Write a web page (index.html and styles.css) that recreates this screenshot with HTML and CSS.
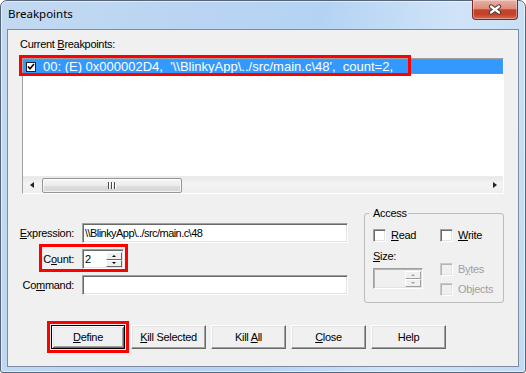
FILE: index.html
```html
<!DOCTYPE html>
<html>
<head>
<meta charset="utf-8">
<title>Breakpoints</title>
<link rel="stylesheet" href="styles.css">
</head>
<body>
<div class="window">
  <div class="titlebar">
    <span class="title">Breakpoints</span>
    <div class="close">
      <svg width="14" height="11" viewBox="0 0 14 11">
        <path d="M3 2.5 L11 8.5 M11 2.5 L3 8.5" stroke="#4a3a38" stroke-width="4.2" stroke-linecap="round" fill="none"/>
        <path d="M3 2.5 L11 8.5 M11 2.5 L3 8.5" stroke="#ffffff" stroke-width="2.2" stroke-linecap="round" fill="none"/>
      </svg>
    </div>
  </div>
  <div class="client">
    <div class="cur-label">Current <u>B</u>reakpoints:</div>
    <div class="listbox">
      <div class="rows">
        <div class="row">
          <span class="lcb">
            <svg width="8" height="8" viewBox="0 0 8 8"><path d="M1 3.5 L3 5.8 L7 1" stroke="#000" stroke-width="1.6" fill="none"/></svg>
          </span>
          <span class="row-text">00: (E) 0x000002D4,  '\\BlinkyApp\../src/main.c\48',  count=2,</span>
        </div>
      </div>
      <div class="hscroll">
        <div class="sb-btn"><span class="arr-left"></span></div>
        <div class="sb-track">
          <div class="thumb"><span class="grip"></span><span class="grip"></span><span class="grip"></span></div>
        </div>
        <div class="sb-btn"><span class="arr-right"></span></div>
      </div>
      <div class="mark mark-row"></div>
    </div>
    <div class="lower">
      <div class="form">
        <label class="flabel"><u>E</u>xpression:</label>
        <div class="edit"><span class="edit-text path">\\BlinkyApp\../src/main.c\48</span></div>
        <label class="flabel">C<u>o</u>unt:</label>
        <div class="spinedit count">
          <span class="edit-text">2</span>
          <div class="spin"><span class="sp"><i class="tri-up"></i></span><span class="sp"><i class="tri-down"></i></span></div>
        </div>
        <label class="flabel">Co<u>m</u>mand:</label>
        <div class="edit"></div>
        <div class="mark mark-count"></div>
      </div>
      <fieldset class="access">
        <legend>Access</legend>
        <div class="col col1">
          <div class="check read"><span class="cb"></span><span><u>R</u>ead</span></div>
          <div class="size-label"><u>S</u>ize:</div>
          <div class="spinedit size disabled">
            <span class="edit-text"></span>
            <div class="spin"><span class="sp"><i class="tri-up"></i></span><span class="sp"><i class="tri-down"></i></span></div>
          </div>
        </div>
        <div class="col col2">
          <div class="check write"><span class="cb"></span><span><u>W</u>rite</span></div>
          <div class="check disabled bytes"><span class="cb"></span><span>B<u>y</u>tes</span></div>
          <div class="check disabled objects"><span class="cb"></span><span>Objects</span></div>
        </div>
      </fieldset>
    </div>
    <div class="buttons">
      <button class="btn default"><u>D</u>efine</button>
      <button class="btn"><u>K</u>ill Selected</button>
      <button class="btn">Kill <u>A</u>ll</button>
      <button class="btn close-btn"><u>C</u>lose</button>
      <button class="btn help-btn">Help</button>
    </div>
  </div>
</div>
</body>
</html>
```
FILE: styles.css
```css
html, body {
  margin: 0;
  padding: 0;
}
body {
  width: 526px;
  height: 373px;
  overflow: hidden;
  background: #ffffff;
  font-family: "Liberation Sans", Arial, sans-serif;
  font-size: 11px;
  letter-spacing: -0.3px;
  color: #000;
}
u { text-decoration: underline; text-underline-offset: 1px; }

.window {
  box-sizing: border-box;
  width: 526px;
  height: 373px;
  border: 1px solid #56657a;
  border-radius: 7px 7px 3px 3px;
  padding: 0 6px 5px 6px;
  background: linear-gradient(100deg, #c3d9f1 0%, #bad5f2 30%, #b4d3f3 55%, #d0e4f8 78%, #c2daf3 100%);
  box-shadow: inset 0 0 0 1px rgba(255,255,255,0.55);
  display: flex;
  flex-direction: column;
}

.titlebar {
  height: 28px;
  display: flex;
  align-items: flex-start;
  justify-content: space-between;
}
.title {
  margin: 5px 0 0 1px;
  font-family: "Noto Sans", "Liberation Sans", sans-serif;
  font-size: 11.5px;
  line-height: 16px;
  letter-spacing: 0;
  color: #000;
}
.close {
  box-sizing: border-box;
  width: 46px;
  height: 20px;
  margin: -1px 1px 0 0;
  border: 1px solid #7a2c22;
  border-top: none;
  border-radius: 0 0 4px 4px;
  background: linear-gradient(#e9b0a4 0%, #dd8d7d 45%, #c6432c 52%, #c44028 75%, #d76a52 100%);
  box-shadow: inset 0 0 0 1px rgba(255,255,255,0.35);
  display: flex;
  align-items: center;
  justify-content: center;
}

.client {
  flex: 1;
  border: 1px solid #7d8ca0;
  background: #f0f0f0;
  display: flex;
  flex-direction: column;
  min-height: 0;
}

.cur-label {
  margin: 8px 0 0 12px;
  line-height: 13px;
}

.listbox {
  position: relative;
  box-sizing: border-box;
  margin: 7px 0 0 14px;
  width: 482px;
  height: 136px;
  border: 1px solid;
  border-color: #a0a0a0 #ffffff #ffffff #a0a0a0;
  background: #fff;
  display: flex;
  flex-direction: column;
}
.rows { flex: 1; }
.row {
  height: 15px;
  background: #3399ff;
  color: #fff;
  display: flex;
  align-items: center;
  outline: 1px dotted #b58a55;
  outline-offset: -1px;
}
.lcb {
  box-sizing: border-box;
  width: 10px;
  height: 10px;
  margin-left: 3px;
  border: 1px solid #222;
  background: #fff;
  display: flex;
  align-items: center;
  justify-content: center;
}
.row-text {
  margin-left: 7px;
  white-space: pre;
  font-size: 13px;
  letter-spacing: 0;
  line-height: 15px;
}

.hscroll {
  height: 17px;
  display: flex;
  background: linear-gradient(#e8e8e8, #f3f3f3 40%, #eeeeee);
  border-top: 1px solid #ececec;
  box-sizing: border-box;
}
.sb-btn {
  width: 17px;
  display: flex;
  align-items: center;
  justify-content: center;
}
.arr-left {
  width: 0; height: 0;
  border-top: 3.5px solid transparent;
  border-bottom: 3.5px solid transparent;
  border-right: 4px solid #222;
}
.arr-right {
  width: 0; height: 0;
  border-top: 3.5px solid transparent;
  border-bottom: 3.5px solid transparent;
  border-left: 4px solid #222;
}
.sb-track {
  flex: 1;
  display: flex;
  align-items: center;
}
.thumb {
  box-sizing: border-box;
  margin-left: 2px;
  width: 140px;
  height: 15px;
  border: 1px solid #979797;
  border-radius: 2px;
  background: linear-gradient(#f6f6f6 0%, #ececec 50%, #dedede 51%, #d6d6d6 100%);
  box-shadow: inset 0 0 0 1px rgba(255,255,255,0.7);
  display: flex;
  align-items: center;
  justify-content: center;
  gap: 1px;
}
.grip {
  width: 1px;
  height: 7px;
  background: #4a4a4a;
  border-right: 1px solid #ffffff;
}

.mark {
  position: absolute;
  box-sizing: border-box;
  border: 3px solid #ff0000;
  pointer-events: none;
}
.mark-row {
  left: -4px;
  top: -4px;
  width: 392px;
  height: 21px;
}

.lower {
  margin-top: 13px;
  display: flex;
  align-items: flex-start;
}
.form {
  position: relative;
  margin-top: 16px;
  display: grid;
  grid-template-columns: 66px 266px;
  grid-auto-rows: 20px;
  column-gap: 8px;
  row-gap: 6px;
}
.flabel {
  align-self: center;
  text-align: right;
  line-height: 13px;
}
.edit, .spinedit {
  box-sizing: border-box;
  height: 20px;
  border: 1px solid;
  border-color: #a0a0a0 #ffffff #ffffff #a0a0a0;
  box-shadow: inset 1px 1px 0 #696969, inset -1px -1px 0 #e3e3e3;
  background: #fff;
  display: flex;
  align-items: center;
}
.edit-text {
  padding-left: 2px;
  line-height: 13px;
  white-space: pre;
}
.edit-text.path { letter-spacing: -0.55px; }
.spinedit.count {
  width: 42px;
}
.spinedit .edit-text { flex: 1; }
.spin {
  width: 16px;
  align-self: stretch;
  display: flex;
  flex-direction: column;
  padding: 2px 1px 1px 0;
  gap: 0;
}
.sp {
  flex: 1;
  box-sizing: border-box;
  background: #f0f0f0;
  border: 1px solid;
  border-color: #ffffff #696969 #696969 #ffffff;
  display: flex;
  align-items: center;
  justify-content: center;
}
.tri-up {
  width: 0; height: 0;
  border-left: 2px solid transparent;
  border-right: 2px solid transparent;
  border-bottom: 2px solid #000;
}
.tri-down {
  width: 0; height: 0;
  border-left: 2px solid transparent;
  border-right: 2px solid transparent;
  border-top: 2px solid #000;
}
.mark-count {
  left: 31px;
  top: 21px;
  width: 89px;
  height: 28px;
}

.access {
  box-sizing: border-box;
  margin: 0 0 0 16px;
  padding: 0 8px;
  width: 140px;
  height: 96px;
  min-width: 0;
  border: 1px solid #bcbcbc;
  border-radius: 3px;
  display: flex;
}
.access legend {
  margin-left: -4px;
  padding: 0 1px 0 4px;
  line-height: 13px;
}
.col {
  display: flex;
  flex-direction: column;
  align-items: flex-start;
  margin-top: 9px;
}
.col1 { width: 67px; }
.check {
  display: flex;
  align-items: center;
  gap: 5px;
  height: 13px;
  line-height: 13px;
}
.cb {
  box-sizing: border-box;
  width: 13px;
  height: 13px;
  border: 1px solid;
  border-color: #a0a0a0 #ffffff #ffffff #a0a0a0;
  box-shadow: inset 1px 1px 0 #696969, inset -1px -1px 0 #e3e3e3;
  background: #fff;
  flex: none;
}
.check.disabled { color: #a0a0a0; }
.check.disabled .cb { background: #f0f0f0; box-shadow: inset 1px 1px 0 #b4b4b4, inset -1px -1px 0 #e3e3e3; border-color: #c8c8c8 #ffffff #ffffff #c8c8c8; }
.check.bytes { margin-top: 21px; }
.check.objects { margin-top: 7px; }
.size-label {
  margin-top: 8px;
  line-height: 13px;
}
.spinedit.size {
  margin-top: 5px;
  width: 50px;
  height: 21px;
  background: #f0f0f0;
  box-shadow: inset 1px 1px 0 #b4b4b4, inset -1px -1px 0 #e3e3e3;
}
.spinedit.size .sp { border-color: #ffffff #a0a0a0 #a0a0a0 #ffffff; }
.spinedit.size .tri-up { border-bottom-color: #a0a0a0; }
.spinedit.size .tri-down { border-top-color: #a0a0a0; }

.buttons {
  margin-top: 22px;
  display: flex;
  align-items: center;
}
.btn {
  box-sizing: border-box;
  width: 75px;
  height: 24px;
  margin: 0;
  padding: 0;
  font-family: "Liberation Sans", Arial, sans-serif;
  font-size: 11px;
  letter-spacing: -0.3px;
  color: #000;
  background: #f0f0f0;
  border: 1px solid;
  border-color: #ffffff #696969 #696969 #ffffff;
  box-shadow: inset -1px -1px 0 #a0a0a0, inset 1px 1px 0 #e3e3e3;
  border-radius: 0;
  line-height: 13px;
}
.btn.default {
  margin-left: 43px;
  width: 74px;
  border-color: #000;
  box-shadow: inset 1px 1px 0 #ffffff, inset -1px -1px 0 #696969, inset 2px 2px 0 #e3e3e3, inset -2px -2px 0 #a0a0a0;
  outline: 3px solid #ff0000;
  outline-offset: 1px;
}
.btn + .btn { margin-left: 6px; }
.btn + .btn + .btn { margin-left: 5px; }
.btn.close-btn { margin-left: 40px; }
.btn.help-btn { margin-left: 29px; }
```
